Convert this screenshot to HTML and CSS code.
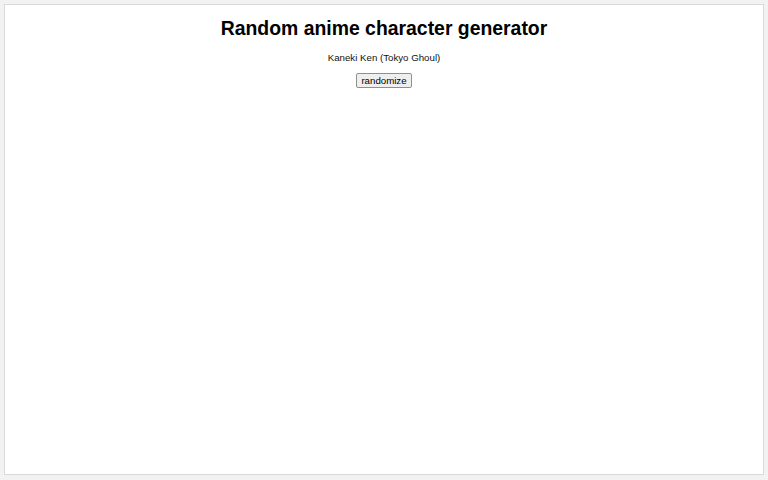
FILE: index.html
```html
<!DOCTYPE html>
<html lang="en">
<head>
    <meta charset="UTF-8">
    <meta name="viewport" content="width=device-width, initial-scale=1.0">
    <title>Random anime character generator</title>
    <link rel="stylesheet" href="styles.css">
</head>
<body>

    <div class="frame">
        <h1>Random anime character generator</h1>
        <p class="character" id="character">Kaneki Ken (Tokyo Ghoul)</p>
        <button type="button" class="randomize-btn" id="randomizeBtn">randomize</button>
    </div>

</body>
</html>
```

FILE: styles.css
```css
body {
    font-family: "Liberation Sans", Arial, sans-serif;
    margin: 0;
    padding: 4px 4px 5px 4px;
    background-color: #f2f2f2;
    height: 480px;
    box-sizing: border-box;
}

.frame {
    background-color: #fff;
    border: 1px solid #d9d9d9;
    height: 100%;
    box-sizing: border-box;
    text-align: center;
    padding-top: 12px;
}

.frame h1 {
    font-size: 19.4px;
    color: #000;
    margin: 0 0 12px 0;
}

.character {
    font-size: 9.7px;
    color: #111;
    margin: 0 0 7px 0;
}

.randomize-btn {
    font-family: "Liberation Sans", Arial, sans-serif;
    font-size: 9.7px;
    padding: 1px 4px;
    background-color: #efefef;
    border: 1px solid #8f8f8f;
    border-radius: 2px;
    color: #000;
}
```
